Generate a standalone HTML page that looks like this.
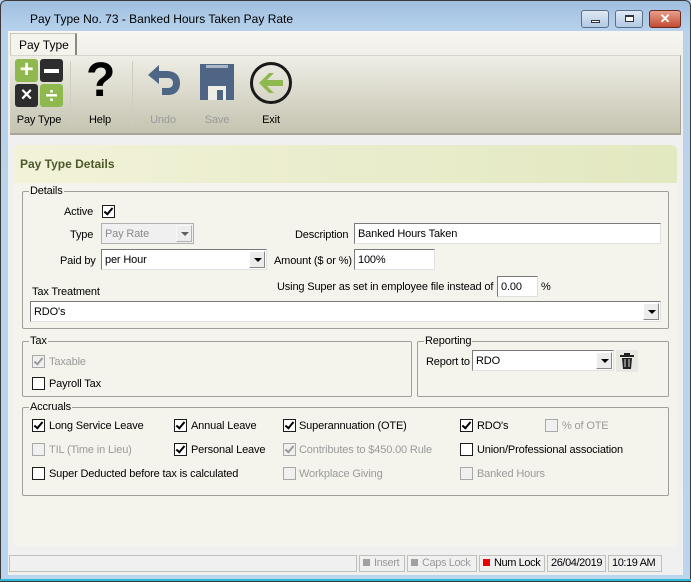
<!DOCTYPE html>
<html><head><meta charset="utf-8"><style>
*{box-sizing:border-box;margin:0;padding:0}
body{width:691px;height:582px;overflow:hidden;position:relative;background:#b9d1ea;font-family:"Liberation Sans",sans-serif;font-size:11px;letter-spacing:-0.15px;color:#000;white-space:nowrap}
.a{position:absolute}
.frame{left:0;top:0;width:691px;height:582px;border:1px solid #3a3a3a;border-radius:6px 6px 0 0;background:linear-gradient(#9fbfdf 0,#b8d2ec 30px,#bcd5ee 100%)}
.title{left:30px;top:12px;font-size:12px;letter-spacing:0;color:#000}
.client{left:8px;top:31px;width:675px;height:544px;background:#f0f0f0}
.lbl{font-size:11px;text-align:center}
.grp{border:1px solid #a0a09a;border-radius:2px}
.leg{background:#f4f4ec;padding:0 1px;line-height:12px}
.in{background:#fff;border:1px solid #7a7a7a;border-right-color:#e0e0e0;border-bottom-color:#e0e0e0;height:21px;padding:3px 3px;line-height:14px}
.dd{position:absolute;right:1px;top:1px;width:16px;height:17px;background:#ececec;border:1px solid #fff;border-right-color:#888;border-bottom-color:#888}
.dd:after{content:"";position:absolute;left:4px;top:6px;border:4px solid transparent;border-top:4px solid #000;border-bottom:0}
.cb{width:13px;height:13px;border:1px solid #1c1c1c;background:#fff;display:inline-block;position:absolute}
.cb.g{border-color:#a8a8a8;background:#f0f0f0}
.cb.c:after{content:"";position:absolute;left:3px;top:0px;width:3px;height:7px;border:solid #000;border-width:0 2px 2px 0;transform:rotate(40deg)}
.cb.g.c:after{border-color:#9a9a9a}
.gt{color:#9a9a9a}
.sb{top:555px;height:17px;border:1px solid #c0c0b8;background:#f0f0f0;font-size:11px;line-height:15px;padding:0 3px;overflow:hidden}
</style></head><body>
<div class="a frame"></div>
<div class="a title">Pay Type No. 73 - Banked Hours Taken Pay Rate</div>
<div class="a" style="left:581px;top:10px;width:28px;height:18px;border:1px solid #5a6f8a;border-radius:3px;background:linear-gradient(#dfe9f5,#b2c8e2)"><div class="a" style="left:9px;top:9px;width:9px;height:3px;border:1px solid #333;background:#fff"></div></div>
<div class="a" style="left:615px;top:10px;width:28px;height:18px;border:1px solid #5a6f8a;border-radius:3px;background:linear-gradient(#dfe9f5,#b2c8e2)"><div class="a" style="left:9px;top:4px;width:9px;height:7px;border:1px solid #333;border-top-width:2px;background:#fff"></div></div>
<div class="a" style="left:649px;top:10px;width:32px;height:18px;border:1px solid #6b2a20;border-radius:3px;background:linear-gradient(#e8a18e,#c34a32);color:#fff;font-weight:bold;font-size:13px;text-align:center;line-height:16px">✕</div>
<div class="a client"></div>
<div class="a" style="left:8px;top:31px;width:675px;height:24px;background:linear-gradient(#f7f6f1,#f0efe8)"></div>
<div class="a" style="left:10px;top:33px;width:67px;height:23px;background:#f4f3ec;border:1px solid #c9c8bc;border-bottom:none;border-right:2px solid #8a8a80;font-size:12px;letter-spacing:0;padding:4px 0 0 8px">Pay Type</div>
<div class="a" style="left:10px;top:55px;width:671px;height:80px;background:linear-gradient(#efeee6,#c5c3b0);border-right:1px solid #a5a395;border-bottom:2px solid #a8a796;border-top:1px solid #d8d7ce"></div>
<div class="a" style="left:70px;top:61px;width:1px;height:66px;background:#cfcdbf"></div>
<div class="a" style="left:132px;top:61px;width:1px;height:66px;background:#cfcdbf"></div>
<div class="a" style="left:15px;top:59px;width:23px;height:23px;background:#8fb84e;border-radius:3px;color:#fff;font-weight:bold;font-size:24px;line-height:22px;text-align:center">+</div>
<div class="a" style="left:40px;top:59px;width:23px;height:23px;background:#2d2d2d;border-radius:3px"><div class="a" style="left:4px;top:10px;width:15px;height:4px;background:#fff"></div></div>
<div class="a" style="left:15px;top:84px;width:23px;height:23px;background:#2d2d2d;border-radius:3px;color:#fff;font-weight:bold;font-size:20px;line-height:23px;text-align:center">×</div>
<div class="a" style="left:40px;top:84px;width:23px;height:23px;background:#8fb84e;border-radius:3px;color:#fff;font-weight:bold;font-size:22px;line-height:23px;text-align:center">÷</div>
<div class="a lbl" style="left:12px;top:114px;width:54px">Pay Type</div>
<div class="a" style="left:86px;top:56px;font-size:48px;font-weight:bold;line-height:50px">?</div>
<div class="a lbl" style="left:82px;top:114px;width:36px">Help</div>
<svg class="a" style="left:144px;top:62px" width="40" height="40" viewBox="0 0 40 40"><path d="M4 13 L15 3 L15 9 L22 9 C32 9 36 14 36 21 C36 28 32 33 24 33 L18 33 L18 26 L24 26 C27 26 29 24 29 21 C29 18 27 16 24 16 L15 16 L15 22 Z" fill="#4e6585"/></svg>
<div class="a lbl gt" style="left:145px;top:114px;width:36px">Undo</div>
<svg class="a" style="left:198px;top:62px" width="38" height="40" viewBox="0 0 38 40"><path d="M2 2 H36 V38 H2 Z" fill="#4e6585"/><rect x="8" y="3" width="22" height="3" fill="#a9b6c6"/><rect x="10" y="24" width="18" height="14" fill="#eeeee6"/><rect x="19" y="28" width="6" height="10" fill="#4e6585"/></svg>
<div class="a lbl gt" style="left:199px;top:114px;width:36px">Save</div>
<svg class="a" style="left:249px;top:61px" width="44" height="44" viewBox="0 0 44 44"><circle cx="22" cy="22" r="19.5" fill="none" stroke="#1a1a1a" stroke-width="3"/><path d="M10 22 L20 12 L25 12 L18 19 H34 V25 H18 L25 32 L20 32 Z" fill="#8fb84e"/></svg>
<div class="a lbl" style="left:253px;top:114px;width:36px">Exit</div>
<div class="a" style="left:14px;top:145px;width:663px;height:402px;background:#f4f4ec;border-radius:6px"></div>
<div class="a" style="left:14px;top:145px;width:663px;height:38px;background:linear-gradient(90deg,#f2f2d9,#e2e8c0);border-radius:6px 6px 0 0"></div>
<div class="a" style="left:20px;top:157px;font-weight:bold;font-size:12px;letter-spacing:0;color:#4c5a2a">Pay Type Details</div>
<div class="a grp" style="left:22px;top:191px;width:647px;height:138px"></div>
<div class="a leg" style="left:29px;top:185px">Details</div>
<div class="a" style="left:64px;top:206px">Active</div><span class="cb c" style="left:102px;top:205px"></span>
<div class="a" style="left:70px;top:229px">Type</div>
<div class="a in" style="left:101px;top:223px;width:93px;background:#f0f0f0;border-color:#b0b0b0;color:#8a8a8a">Pay Rate<div class="dd" style="opacity:.6"></div></div>
<div class="a" style="left:295px;top:229px">Description</div>
<div class="a in" style="left:354px;top:223px;width:307px">Banked Hours Taken</div>
<div class="a" style="left:60px;top:255px">Paid by</div>
<div class="a in" style="left:101px;top:249px;width:166px">per Hour<div class="dd"></div></div>
<div class="a" style="left:274px;top:255px">Amount ($ or %)</div>
<div class="a in" style="left:354px;top:249px;width:81px">100%</div>
<div class="a" style="left:277px;top:281px">Using Super as set in employee file instead of</div>
<div class="a in" style="left:497px;top:276px;width:41px">0.00</div>
<div class="a" style="left:541px;top:281px">%</div>
<div class="a" style="left:32px;top:286px">Tax Treatment</div>
<div class="a in" style="left:30px;top:301px;width:631px">RDO's<div class="dd"></div></div>
<div class="a grp" style="left:22px;top:341px;width:390px;height:56px"></div>
<div class="a leg" style="left:29px;top:335px">Tax</div>
<span class="cb g c" style="left:32px;top:355px"></span><div class="a gt" style="left:49px;top:356px">Taxable</div>
<span class="cb" style="left:32px;top:377px"></span><div class="a" style="left:49px;top:378px">Payroll Tax</div>
<div class="a grp" style="left:417px;top:341px;width:252px;height:56px"></div>
<div class="a leg" style="left:424px;top:335px">Reporting</div>
<div class="a" style="left:426px;top:356px">Report to</div>
<div class="a in" style="left:472px;top:350px;width:142px">RDO<div class="dd"></div></div>
<div class="a" style="left:616px;top:350px;width:22px;height:22px;background:#e8e8e2"></div>
<svg class="a" style="left:620px;top:353px" width="14" height="16" viewBox="0 0 14 16"><rect x="4" y="0" width="6" height="2" fill="#222"/><rect x="0" y="2" width="14" height="2" fill="#222"/><path d="M2 5 H12 L11 16 H3 Z" fill="#222"/><rect x="4.5" y="6" width="1" height="8" fill="#ddd"/><rect x="8.5" y="6" width="1" height="8" fill="#ddd"/></svg>
<div class="a grp" style="left:22px;top:407px;width:647px;height:89px"></div>
<div class="a leg" style="left:29px;top:401px">Accruals</div>
<span class="cb c" style="left:32px;top:419px"></span><div class="a" style="left:49px;top:420px">Long Service Leave</div>
<span class="cb c" style="left:174px;top:419px"></span><div class="a" style="left:191px;top:420px">Annual Leave</div>
<span class="cb c" style="left:283px;top:419px"></span><div class="a" style="left:299px;top:420px">Superannuation (OTE)</div>
<span class="cb c" style="left:460px;top:419px"></span><div class="a" style="left:477px;top:420px">RDO's</div>
<span class="cb g" style="left:545px;top:419px"></span><div class="a gt" style="left:562px;top:420px">% of OTE</div>
<span class="cb g" style="left:32px;top:443px"></span><div class="a gt" style="left:49px;top:444px">TIL (Time in Lieu)</div>
<span class="cb c" style="left:174px;top:443px"></span><div class="a" style="left:191px;top:444px">Personal Leave</div>
<span class="cb g c" style="left:283px;top:443px"></span><div class="a gt" style="left:299px;top:444px">Contributes to $450.00 Rule</div>
<span class="cb" style="left:460px;top:443px"></span><div class="a" style="left:477px;top:444px">Union/Professional association</div>
<span class="cb" style="left:32px;top:467px"></span><div class="a" style="left:49px;top:468px">Super Deducted before tax is calculated</div>
<span class="cb g" style="left:283px;top:467px"></span><div class="a gt" style="left:299px;top:468px">Workplace Giving</div>
<span class="cb g" style="left:460px;top:467px"></span><div class="a gt" style="left:477px;top:468px">Banked Hours</div>
<div class="a sb" style="left:9px;width:348px"></div>
<div class="a sb gt" style="left:359px;width:46px;letter-spacing:-0.4px"><span style="display:inline-block;width:7px;height:7px;background:#a0a0a0;margin-right:4px"></span>Insert</div>
<div class="a sb gt" style="left:407px;width:70px;letter-spacing:-0.4px"><span style="display:inline-block;width:7px;height:7px;background:#a0a0a0;margin-right:4px"></span>Caps Lock</div>
<div class="a sb" style="left:479px;width:66px;letter-spacing:-0.4px"><span style="display:inline-block;width:7px;height:7px;background:#e00;margin-right:4px"></span>Num Lock</div>
<div class="a sb" style="left:547px;width:59px;letter-spacing:-0.4px">26/04/2019</div>
<div class="a sb" style="left:608px;width:54px;letter-spacing:-0.4px">10:19 AM</div>
<div class="a" style="left:0;top:579px;width:691px;height:2px;background:#2fb8d8"></div>
</body></html>
